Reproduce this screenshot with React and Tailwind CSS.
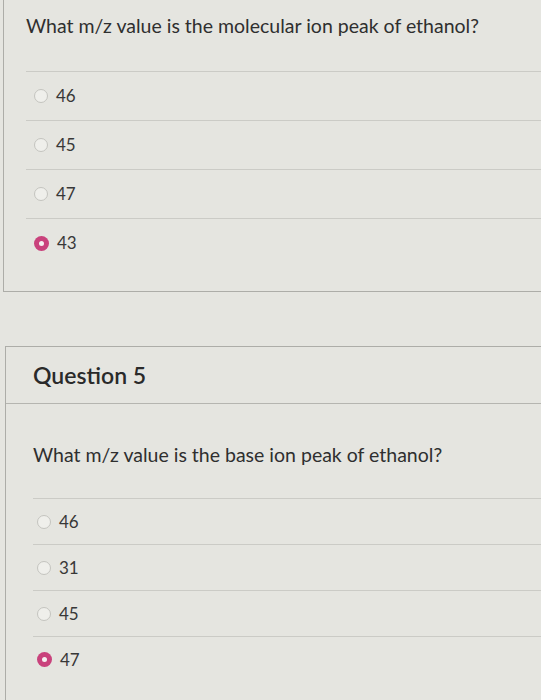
import React from 'react';

function Radio({ checked }) {
    if (checked) {
        return (
            <span className="flex h-[15px] w-[15px] items-center justify-center rounded-full bg-[#c9427c]">
                <span className="h-[5px] w-[5px] rounded-full bg-[#f4f1f1]" />
            </span>
        );
    }
    return <span className="h-[14px] w-[14px] rounded-full border border-[#c4c4bf] bg-[#efefeb]" />;
}

function Options({ items, selected, rowH, pad }) {
    return (
        <div>
            {items.map((v, i) => (
                <div
                    key={i}
                    className={`flex items-center gap-[8px] border-t border-[#cbcbc6] ${pad} ${rowH}`}
                >
                    <Radio checked={i === selected} />
                    <span className="text-[17px] text-[#383838]">{v}</span>
                </div>
            ))}
        </div>
    );
}

export default function App() {
    return (
        <div
            className="h-[700px] w-[541px] overflow-hidden bg-[#e5e5e0] text-[#2f2f2f]"
            style={{ fontFamily: 'Lato, "Open Sans", sans-serif' }}
        >
            {/* Question 4 (tail) */}
            <div className="ml-[3px] border-b border-l border-[#adada8] pb-[24px] pl-[22px] pt-[12px]">
                <p className="text-[19.5px] leading-[28px]">What m/z value is the molecular ion peak of ethanol?</p>
                <div className="mt-[31px]">
                    <Options items={['46', '45', '47', '43']} selected={3} rowH="h-[49px]" pad="pl-[8px]" />
                </div>
            </div>

            {/* Question 5 */}
            <div className="ml-[5px] mt-[54px] border-l border-t border-[#adada8] pb-[60px]">
                <div className="flex h-[57px] items-center border-b border-[#b5b5b0] pl-[27px]">
                    <h2 className="text-[23px] font-semibold text-[#2a2a2a]">Question 5</h2>
                </div>
                <div className="pl-[27px] pt-[38px]">
                    <p className="text-[19.5px] leading-[26px]">What m/z value is the base ion peak of ethanol?</p>
                    <div className="mt-[30px]">
                        <Options items={['46', '31', '45', '47']} selected={3} rowH="h-[46px]" pad="pl-[4px]" />
                    </div>
                </div>
            </div>
        </div>
    );
}
